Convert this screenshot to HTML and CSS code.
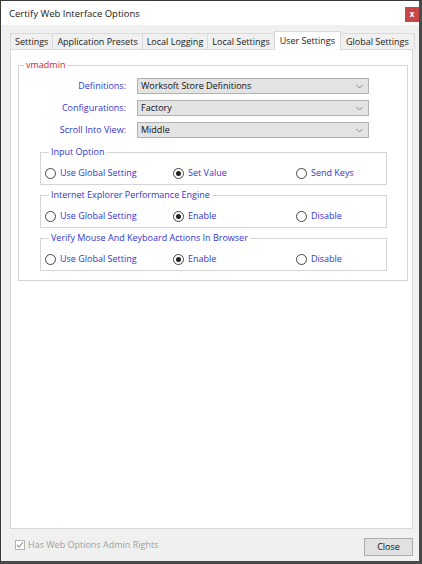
FILE: index.html
```html
<!DOCTYPE html>
<html>
<head>
<meta charset="utf-8">
<title>Certify Web Interface Options</title>
<link rel="stylesheet" href="styles.css">
</head>
<body>
<div class="window">
  <div class="titlebar">
    <span class="title">Certify Web Interface Options</span>
    <span class="close-x">x</span>
  </div>
  <div class="client">
    <div class="tabs">
      <div class="tab">Settings</div>
      <div class="tab">Application Presets</div>
      <div class="tab">Local Logging</div>
      <div class="tab">Local Settings</div>
      <div class="tab active">User Settings</div>
      <div class="tab">Global Settings</div>
    </div>
    <div class="panel">
      <fieldset class="group user-group">
        <legend class="legend-red">vmadmin</legend>
        <div class="form-grid">
          <label class="field-label">Definitions:</label>
          <div class="select"><span>Worksoft Store Definitions</span><svg class="chev" width="7" height="5" viewBox="0 0 7 5"><path d="M0.5 1 L3.5 4 L6.5 1" fill="none" stroke="#8a8a8a" stroke-width="1"/></svg></div>
          <label class="field-label">Configurations:</label>
          <div class="select"><span>Factory</span><svg class="chev" width="7" height="5" viewBox="0 0 7 5"><path d="M0.5 1 L3.5 4 L6.5 1" fill="none" stroke="#8a8a8a" stroke-width="1"/></svg></div>
          <label class="field-label">Scroll Into View:</label>
          <div class="select"><span>Middle</span><svg class="chev" width="7" height="5" viewBox="0 0 7 5"><path d="M0.5 1 L3.5 4 L6.5 1" fill="none" stroke="#8a8a8a" stroke-width="1"/></svg></div>
        </div>

        <fieldset class="group sub-group">
          <legend class="legend-blue">Input Option</legend>
          <div class="radio-row">
            <label class="radio"><span class="dot"></span>Use Global Setting</label>
            <label class="radio"><span class="dot on"></span>Set Value</label>
            <label class="radio"><span class="dot"></span>Send Keys</label>
          </div>
        </fieldset>

        <fieldset class="group sub-group">
          <legend class="legend-blue">Internet Explorer Performance Engine</legend>
          <div class="radio-row">
            <label class="radio"><span class="dot"></span>Use Global Setting</label>
            <label class="radio"><span class="dot on"></span>Enable</label>
            <label class="radio"><span class="dot"></span>Disable</label>
          </div>
        </fieldset>

        <fieldset class="group sub-group">
          <legend class="legend-blue">Verify Mouse And Keyboard Actions In Browser</legend>
          <div class="radio-row">
            <label class="radio"><span class="dot"></span>Use Global Setting</label>
            <label class="radio"><span class="dot on"></span>Enable</label>
            <label class="radio"><span class="dot"></span>Disable</label>
          </div>
        </fieldset>
      </fieldset>
    </div>
    <div class="footer">
      <label class="check">
        <span class="box"><svg width="8" height="8" viewBox="0 0 8 8"><path d="M1 4 L3 6.2 L7 1.2" fill="none" stroke="#9a9a9a" stroke-width="1.2"/></svg></span>
        Has Web Options Admin Rights
      </label>
      <div class="button">Close</div>
    </div>
  </div>
</div>
</body>
</html>
```

FILE: styles.css
```css
* { box-sizing: border-box; }

html, body {
  margin: 0;
  padding: 0;
  background: #ffffff;
}

body {
  font-family: "Open Sans", "Noto Sans", "Liberation Sans", sans-serif;
  font-size: 9px;
  line-height: 12px;
  color: #1a1a1a;
}

.window {
  width: 422px;
  height: 564px;
  border-top: 1px solid #3a3a3a;
  border-left: 1px solid #3a3a3a;
  border-right: 3px solid #4a4a4a;
  border-bottom: 3px solid #4a4a4a;
  display: flex;
  flex-direction: column;
}

.titlebar {
  height: 24px;
  background: #ffffff;
  display: flex;
  align-items: flex-start;
  padding-left: 8px;
}

.title {
  margin-top: 7px;
  font-size: 9.5px;
  color: #1a1a1a;
}

.close-x {
  margin-left: auto;
  margin-top: 6px;
  width: 14px;
  height: 15px;
  background: #c94646;
  color: #ffffff;
  font-size: 8px;
  line-height: 14px;
  text-align: center;
  font-weight: bold;
}

.client {
  flex: 1;
  background: #f0f0f0;
  padding: 6px 6px 0 9px;
  display: flex;
  flex-direction: column;
}

.tabs {
  display: flex;
  align-items: flex-end;
  height: 18px;
  position: relative;
  z-index: 1;
}

.tab {
  height: 16px;
  padding: 0 4px;
  border: 1px solid #d9d9d9;
  border-bottom: none;
  border-left: none;
  background: #f0f0f0;
  line-height: 15px;
  color: #1a1a1a;
  white-space: nowrap;
}

.tab:first-child {
  border-left: 1px solid #d9d9d9;
}

.tab.active {
  height: 19px;
  margin-bottom: -1px;
  background: #ffffff;
  border-left: 1px solid #d9d9d9;
  margin-left: -1px;
  padding: 0 5px;
  line-height: 17px;
}

.tab:last-child {
  padding: 0 5px;
}

.panel {
  flex: 1;
  background: #ffffff;
  border: 1px solid #d9d9d9;
  padding: 0 4px 0 7px;
}

.group {
  margin: 0;
  border: 1px solid #d5d5d5;
  min-width: 0;
}

legend {
  padding: 0 2px;
  line-height: 12px;
  height: 12px;
}

.legend-red {
  color: #e2202c;
  margin-left: 5px;
}

.legend-blue {
  color: #3434d0;
  margin-left: 4px;
}

.user-group {
  margin-top: 9px;
  padding: 7px 20px 9px 0;
}

.form-grid {
  display: grid;
  grid-template-columns: 107px 232px;
  column-gap: 11px;
  row-gap: 6px;
  align-items: center;
}

.field-label {
  text-align: right;
  color: #3434d0;
}

.select {
  height: 16px;
  background: #e3e3e3;
  border: 1px solid #b2b2b2;
  display: flex;
  align-items: center;
  justify-content: space-between;
  padding: 0 5px 0 3px;
  color: #111111;
}

.chev {
  display: block;
}

.sub-group {
  margin: 8px 0 0 21px;
  padding: 9px 0 5px 4px;
}

.sub-group + .sub-group {
  margin-top: 4px;
}

.radio-row {
  display: grid;
  grid-template-columns: 128px 123px auto;
  align-items: center;
}

.radio {
  display: flex;
  align-items: center;
  color: #3434d0;
  white-space: nowrap;
}

.dot {
  width: 11px;
  height: 11px;
  border: 1px solid #444444;
  border-radius: 50%;
  background: #ffffff;
  margin-right: 4px;
  display: flex;
  align-items: center;
  justify-content: center;
  flex: none;
}

.dot.on::after {
  content: "";
  width: 5px;
  height: 5px;
  border-radius: 50%;
  background: #222222;
}

.footer {
  height: 32px;
  display: flex;
  align-items: center;
  justify-content: space-between;
  padding-top: 3px;
}

.check {
  display: flex;
  align-items: center;
  color: #a0a0a0;
  margin-left: 5px;
  margin-top: -3px;
}

.box {
  width: 10px;
  height: 10px;
  border: 1px solid #b4b4b4;
  background: #ffffff;
  margin-right: 3px;
  display: flex;
  align-items: center;
  justify-content: center;
}

.box svg { display: block; }

.button {
  width: 49px;
  height: 18px;
  background: #e1e1e1;
  border: 1px solid #adadad;
  text-align: center;
  line-height: 16px;
  color: #111111;
}
```
